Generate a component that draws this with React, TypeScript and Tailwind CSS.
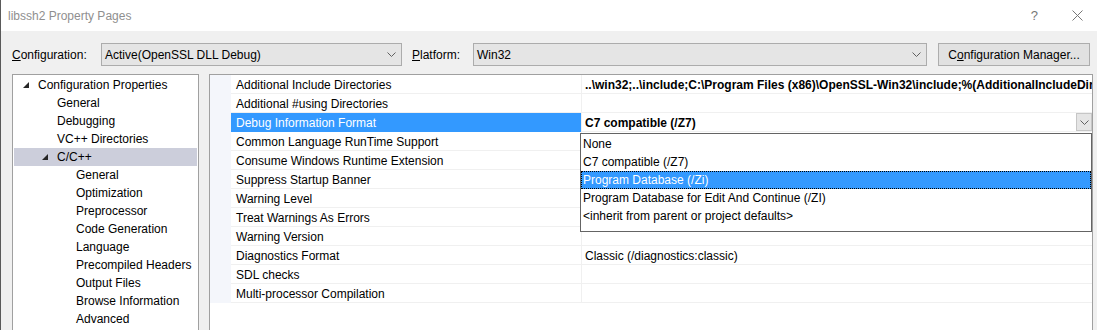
import React from "react";

type TreeItem = { label: string; level: number; expanded?: boolean; selected?: boolean };

const tree: TreeItem[] = [
  { label: "Configuration Properties", level: 0, expanded: true },
  { label: "General", level: 1 },
  { label: "Debugging", level: 1 },
  { label: "VC++ Directories", level: 1 },
  { label: "C/C++", level: 1, expanded: true, selected: true },
  { label: "General", level: 2 },
  { label: "Optimization", level: 2 },
  { label: "Preprocessor", level: 2 },
  { label: "Code Generation", level: 2 },
  { label: "Language", level: 2 },
  { label: "Precompiled Headers", level: 2 },
  { label: "Output Files", level: 2 },
  { label: "Browse Information", level: 2 },
  { label: "Advanced", level: 2 },
];

type Prop = { name: string; value?: string; bold?: boolean; selected?: boolean };

const props: Prop[] = [
  {
    name: "Additional Include Directories",
    value: "..\\win32;..\\include;C:\\Program Files (x86)\\OpenSSL-Win32\\include;%(AdditionalIncludeDirectories)",
    bold: true,
  },
  { name: "Additional #using Directories" },
  { name: "Debug Information Format", value: "C7 compatible (/Z7)", bold: true, selected: true },
  { name: "Common Language RunTime Support" },
  { name: "Consume Windows Runtime Extension" },
  { name: "Suppress Startup Banner" },
  { name: "Warning Level" },
  { name: "Treat Warnings As Errors" },
  { name: "Warning Version" },
  { name: "Diagnostics Format", value: "Classic (/diagnostics:classic)" },
  { name: "SDL checks" },
  { name: "Multi-processor Compilation" },
];

const options = [
  "None",
  "C7 compatible (/Z7)",
  "Program Database (/Zi)",
  "Program Database for Edit And Continue (/ZI)",
  "<inherit from parent or project defaults>",
];

function Chevron() {
  return (
    <svg width="9" height="5" viewBox="0 0 9 5" className="shrink-0">
      <polyline points="0.5,0.5 4.5,4.5 8.5,0.5" fill="none" stroke="#606060" strokeWidth="1" />
    </svg>
  );
}

function Expander() {
  return (
    <svg width="6" height="6" viewBox="0 0 6 6">
      <polygon points="6,0 6,6 0,6" fill="#262626" />
    </svg>
  );
}

function Combo({ text, width }: { text: string; width: string }) {
  return (
    <div className={`flex h-[23px] items-center justify-between border border-[#acacac] bg-[#e5e5e5] pl-[3px] pr-[5px] ${width}`}>
      <span>{text}</span>
      <Chevron />
    </div>
  );
}

export default function App() {
  return (
    <div className="relative h-[330px] w-[1097px] overflow-hidden border-l border-[#5a5a5a] bg-[#f0f0f0] font-['Liberation_Sans',Arial,sans-serif] text-[12px] leading-none text-black">
      {/* title bar */}
      <div className="flex h-[31px] items-center bg-white pl-[7px] text-[#8f8f8f]">
        <span className="text-[12px]">libssh2 Property Pages</span>
        <span className="ml-auto mr-[34px] text-[13px] text-[#777]">?</span>
        <svg width="11" height="11" viewBox="0 0 11 11" className="mr-[14px]">
          <path d="M0.5 0.5 L10.5 10.5 M10.5 0.5 L0.5 10.5" stroke="#777" strokeWidth="1" />
        </svg>
      </div>

      {/* configuration row */}
      <div className="mt-[12px] flex h-[23px] items-center pl-[11px]">
        <span className="w-[89px]">
          <u>C</u>onfiguration:
        </span>
        <Combo text="Active(OpenSSL DLL Debug)" width="w-[301px]" />
        <span className="ml-[10px] w-[61px]">
          <u>P</u>latform:
        </span>
        <Combo text="Win32" width="w-[454px]" />
        <button className="ml-[11px] flex h-[23px] w-[152px] items-center justify-center border border-[#adadad] bg-[#e1e1e1]">
          C<u>o</u>nfiguration Manager...
        </button>
      </div>

      {/* panels */}
      <div className="mt-[8px] flex pl-[11px]">
        <div className="h-[270px] w-[187px] border border-[#a0a0a0] bg-white pt-[1px]">
          {tree.map((t, i) => (
            <div
              key={i}
              className={`mx-[1px] flex h-[18px] items-center ${t.selected ? "bg-[#cccedb]" : ""}`}
              style={{ paddingLeft: 9 + t.level * 19 }}
            >
              <span className="flex w-[15px] items-center">{t.expanded && <Expander />}</span>
              <span>{t.label}</span>
            </div>
          ))}
        </div>

        <div className="ml-[10px] h-[270px] w-[884px] border border-[#a0a0a0] bg-white">
          {props.map((p, i) => (
            <div key={i} className="flex h-[19px]">
              <div className="w-[21px] bg-[#f4f6fb]" />
              <div
                className={`flex w-[350px] items-center border-b pl-[5px] pt-[1px] ${
                  p.selected ? "border-[#3399ff] bg-[#3399ff] text-white" : "border-[#f0f0f0]"
                }`}
              >
                {p.name}
              </div>
              <div className="w-px bg-[#f0f0f0]" />
              <div className="flex w-[510px] items-center overflow-hidden whitespace-nowrap border-b border-[#f0f0f0] pl-[3px]">
                <span className={`pt-[1px] ${p.bold ? "font-bold" : ""}`}>{p.value}</span>
                {p.selected && (
                  <span className="ml-auto flex h-[18px] w-[16px] shrink-0 items-center justify-center border border-[#c6c6c6] bg-[#e5e5e5]">
                    <Chevron />
                  </span>
                )}
              </div>
            </div>
          ))}
        </div>
      </div>

      {/* open dropdown list */}
      <div className="absolute left-[579px] top-[133px] h-[99px] w-[512px] border border-[#646464] bg-white pt-[1px]">
        {options.map((o, i) => (
          <div
            key={i}
            className={`flex h-[18px] items-center pl-[1px] ${
              i === 2 ? "border border-dotted border-black bg-[#3399ff] text-white" : "border border-transparent"
            }`}
          >
            {o}
          </div>
        ))}
      </div>
    </div>
  );
}
